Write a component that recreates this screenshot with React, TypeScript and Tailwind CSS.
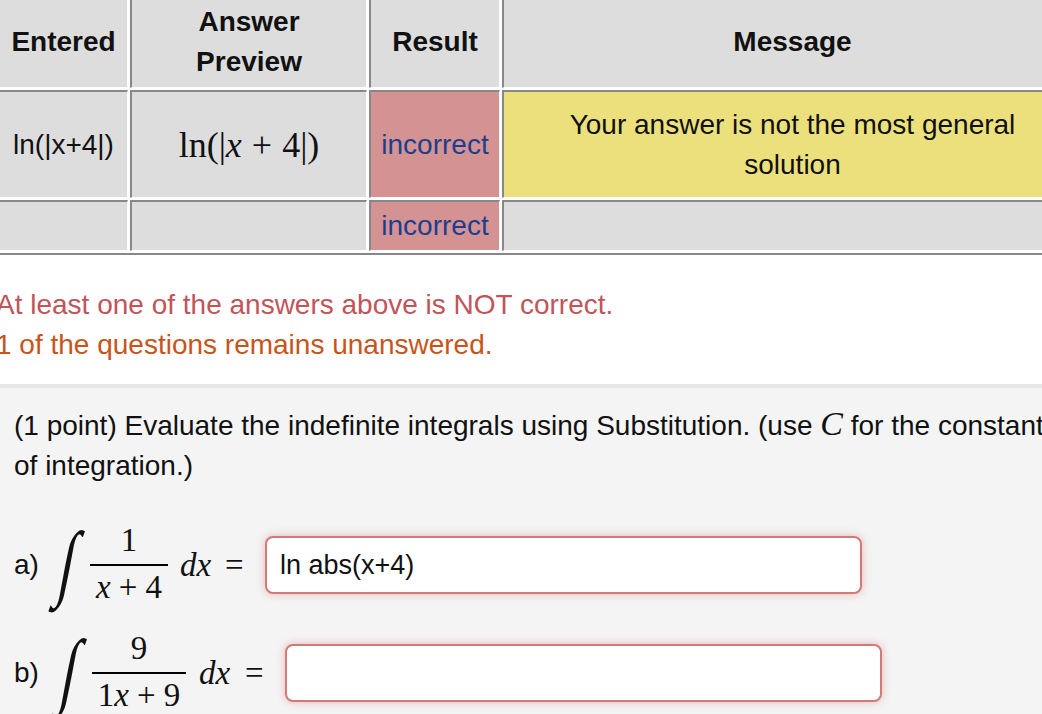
import React from 'react'

const cell =
  'flex flex-col items-center justify-center text-center border-t-2 border-l-2 border-[#888] border-b border-r border-b-white border-r-white'

const serif = "font-['Liberation_Serif',serif]"

function Plus({ gap = 'mx-[8px]' }: { gap?: string }) {
  return <span className={gap}>+</span>
}

function Fraction({ num, den, width }: { num: React.ReactNode; den: React.ReactNode; width: string }) {
  return (
    <div className={`${width} flex flex-col items-center ${serif} text-[33px] leading-none translate-y-[-1px]`}>
      <div className="pb-[7px]">{num}</div>
      <div className="w-full border-t-2 border-black" />
      <div className="pt-[5px]">{den}</div>
    </div>
  )
}

function Integral({ box }: { box: string }) {
  return (
    <div className={`${box} h-[78px] flex items-center justify-center -translate-y-[4px]`}>
      <span className={`${serif} text-[56px] leading-none inline-block scale-y-[1.5] skew-x-[-16deg]`}>
        ∫
      </span>
    </div>
  )
}

export default function App() {
  return (
    <div className="w-[1042px] h-[714px] overflow-hidden bg-white font-['Liberation_Sans',Arial,sans-serif] text-[#111]">
      <div className="-mt-[6px]">
        {/* Results table */}
        <div className="ml-[-2px] w-[1090px] pb-[2px] border-b-2 border-[#888]">
          <div className="grid grid-cols-[130px_237px_131px_580px] grid-rows-[94px_108px_51px] gap-[2px] text-[28px] leading-[40px]">
            <div className={`${cell} bg-[#dddddd] font-bold`}>Entered</div>
            <div className={`${cell} bg-[#dddddd] font-bold`}>
              <span>Answer</span>
              <span>Preview</span>
            </div>
            <div className={`${cell} bg-[#dddddd] font-bold`}>Result</div>
            <div className={`${cell} bg-[#dddddd] font-bold`}>Message</div>

            <div className={`${cell} bg-[#dddddd]`}>ln(|x+4|)</div>
            <div className={`${cell} bg-[#dddddd]`}>
              <span className={`${serif} text-[36px] whitespace-nowrap`}>
                ln(|<i>x</i>
                <Plus gap="mx-[10px]" />
                4|)
              </span>
            </div>
            <div className={`${cell} bg-[#d49292] text-[#1b3e8f]`}>incorrect</div>
            <div className={`${cell} bg-[#ece07c] px-[14px]`}>
              Your answer is not the most general solution
            </div>

            <div className={`${cell} bg-[#dddddd]`} />
            <div className={`${cell} bg-[#dddddd]`} />
            <div className={`${cell} bg-[#d49292] text-[#1b3e8f]`}>incorrect</div>
            <div className={`${cell} bg-[#dddddd]`} />
          </div>
        </div>

        {/* Summary messages */}
        <div className="ml-[-4px] mt-[30px] h-[99px] text-[28px] leading-[40px] whitespace-nowrap">
          <div className="text-[#c2545a]">At least one of the answers above is NOT correct.</div>
          <div className="text-[#c9541a]">1 of the questions remains unanswered.</div>
        </div>

        {/* Problem */}
        <div className="w-[1120px] h-[340px] bg-[#f4f4f4] border-t-[4px] border-[#e6e6e6] pl-[14px] pt-[16px] text-[28px] leading-[40px]">
          <div className="whitespace-nowrap">
            (1 point) Evaluate the indefinite integrals using Substitution. (use{' '}
            <i className={`${serif} text-[34px]`}>C</i> for the constant
          </div>
          <div>of integration.)</div>

          <div className="mt-[34px] flex flex-col gap-[18px]">
            <div className="h-[90px] flex items-center">
              <span className="w-[34px]">a)</span>
              <Integral box="w-[42px]" />
              <Fraction num="1" den={<span><i>x</i><Plus />4</span>} width="w-[78px]" />
              <span className={`ml-[12px] w-[35px] ${serif} text-[33px] italic`}>dx</span>
              <span className={`ml-[10px] w-[20px] ${serif} text-[33px]`}>=</span>
              <div className="ml-[20px] w-[597px] h-[58px] bg-white rounded-[8px] border-2 border-[#d17a7a] shadow-[0_0_8px_rgba(210,110,110,0.45)] flex items-center pl-[13px] text-[27px]">
                ln abs(x+4)
              </div>
            </div>
            <div className="h-[90px] flex items-center">
              <span className="w-[36px]">b)</span>
              <Integral box="w-[42px]" />
              <Fraction num="9" den={<span>1<i>x</i><Plus />9</span>} width="w-[94px]" />
              <span className={`ml-[13px] w-[33px] ${serif} text-[33px] italic`}>dx</span>
              <span className={`ml-[13px] w-[20px] ${serif} text-[33px]`}>=</span>
              <div className="ml-[20px] w-[597px] h-[58px] bg-white rounded-[8px] border-2 border-[#d17a7a] shadow-[0_0_8px_rgba(210,110,110,0.45)]" />
            </div>
          </div>
        </div>
      </div>
    </div>
  )
}
